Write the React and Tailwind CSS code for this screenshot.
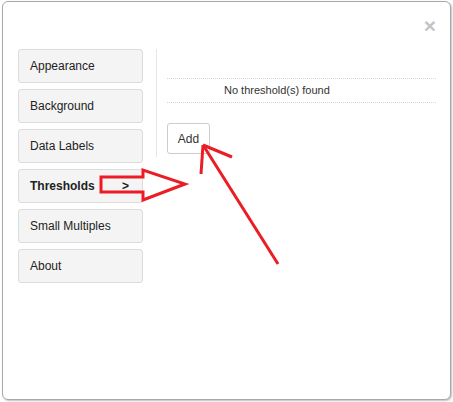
import React from 'react';

const tabs = ['Appearance', 'Background', 'Data Labels', 'Thresholds', 'Small Multiples', 'About'];

const App = () => {
  return (
    <div className="relative w-[453px] h-[402px] bg-white overflow-hidden" style={{ fontFamily: '"Liberation Sans", Arial, sans-serif' }}>
      <div className="ml-[2px] mt-[1px] w-[449px] h-[399px] bg-white border border-[#a8a8a8] rounded-[6px] shadow-[1px_1px_2px_rgba(0,0,0,0.25)]">
        {/* header */}
        <div className="h-[47px] flex justify-end items-start pr-[14px] pt-[12px]">
          <span className="text-[#c4c4c4] text-[21px] font-bold leading-[24px]">×</span>
        </div>

        <div className="flex items-start">
          {/* tabs */}
          <div className="ml-[15px] w-[125px] flex flex-col gap-[6px]">
            {tabs.map((t) => (
              <div
                key={t}
                className={`h-[34px] flex items-center justify-between pl-[11px] pr-[13px] bg-[#f4f4f4] border border-[#dcdcdc] rounded-[3px] text-[12px] text-[#222] ${t === 'Thresholds' ? 'font-bold' : ''}`}
              >
                <span>{t}</span>
                {t === 'Thresholds' && <span className="font-bold">&gt;</span>}
              </div>
            ))}
          </div>

          {/* content */}
          <div className="ml-[13px] border-l border-[#e6e6e6] pl-[10px] pb-[3px] w-[280px]">
            <div className="h-[30px] border-b border-dotted border-[#d6d6d6]" />
            <div className="h-[24px] flex items-center pl-[57px] border-b border-dotted border-[#d6d6d6] text-[11px] text-[#333]">
              No threshold(s) found
            </div>
            <div className="mt-[20px]">
              <button className="h-[31px] w-[43px] bg-white border border-[#cccccc] rounded-[3px] text-[12px] text-[#333]">
                Add
              </button>
            </div>
          </div>
        </div>
      </div>

      {/* red annotation arrows */}
      <svg className="absolute left-0 top-0 pointer-events-none" width="453" height="402" viewBox="0 0 453 402">
        <g fill="none" stroke="#ec1c24" strokeWidth="3" strokeLinejoin="miter">
          <polygon points="101,177 143,177 143,170 185,184 143,200 143,192 101,192" />
          <line x1="278" y1="264" x2="203" y2="145" />
          <line x1="203" y1="145" x2="201" y2="174" />
          <line x1="203" y1="145" x2="232" y2="157" />
        </g>
      </svg>
    </div>
  );
};

export default App;
